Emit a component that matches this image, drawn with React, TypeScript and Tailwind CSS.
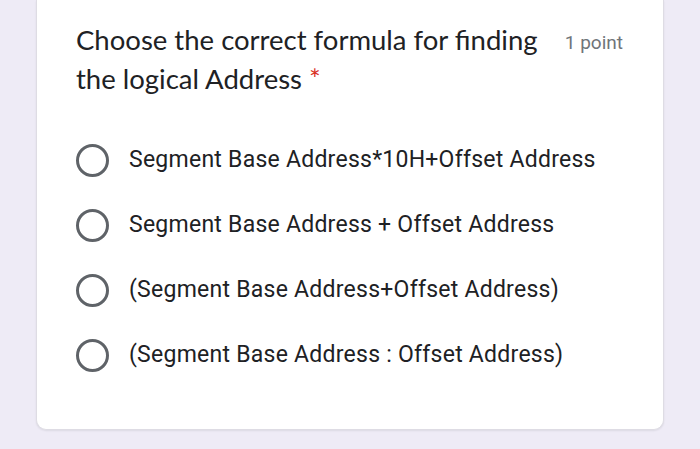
const options = [
  "Segment Base Address*10H+Offset Address",
  "Segment Base Address + Offset Address",
  "(Segment Base Address+Offset Address)",
  "(Segment Base Address : Offset Address)",
];

export default function App() {
  return (
    <div className="w-[700px] h-[449px] bg-[#eeebf6] overflow-hidden">
      <div className="mx-[36px] w-[628px] bg-white rounded-b-[10px] border-b border-x border-[#dedce4] pl-[39px] pr-[40px] pt-[20px] pb-[41px] shadow-[0_1px_2px_rgba(0,0,0,0.08)]">
        <div className="flex items-start justify-between">
          <h1
            className="w-[476px] text-[27.5px] leading-[39px] text-[#202124]"
            style={{ fontFamily: "Lato, 'Open Sans', sans-serif" }}
          >
            Choose the correct formula for finding the logical Address{" "}
            <span className="text-[#d93025]">*</span>
          </h1>
          <span
            className="pt-[11px] text-[19px] leading-[24px] text-[#70757a]"
            style={{ fontFamily: "Roboto, sans-serif" }}
          >
            1 point
          </span>
        </div>
        <div className="mt-[30px]">
          {options.map((o) => (
            <label key={o} className="flex h-[65px] items-center gap-[20px]">
              <span className="h-[33px] w-[33px] shrink-0 rounded-full border-[3px] border-[#5f6368]" />
              <span
                className="text-[23px] tracking-[0.25px] text-[#202124]"
                style={{ fontFamily: "Roboto, sans-serif" }}
              >
                {o}
              </span>
            </label>
          ))}
        </div>
      </div>
    </div>
  );
}
